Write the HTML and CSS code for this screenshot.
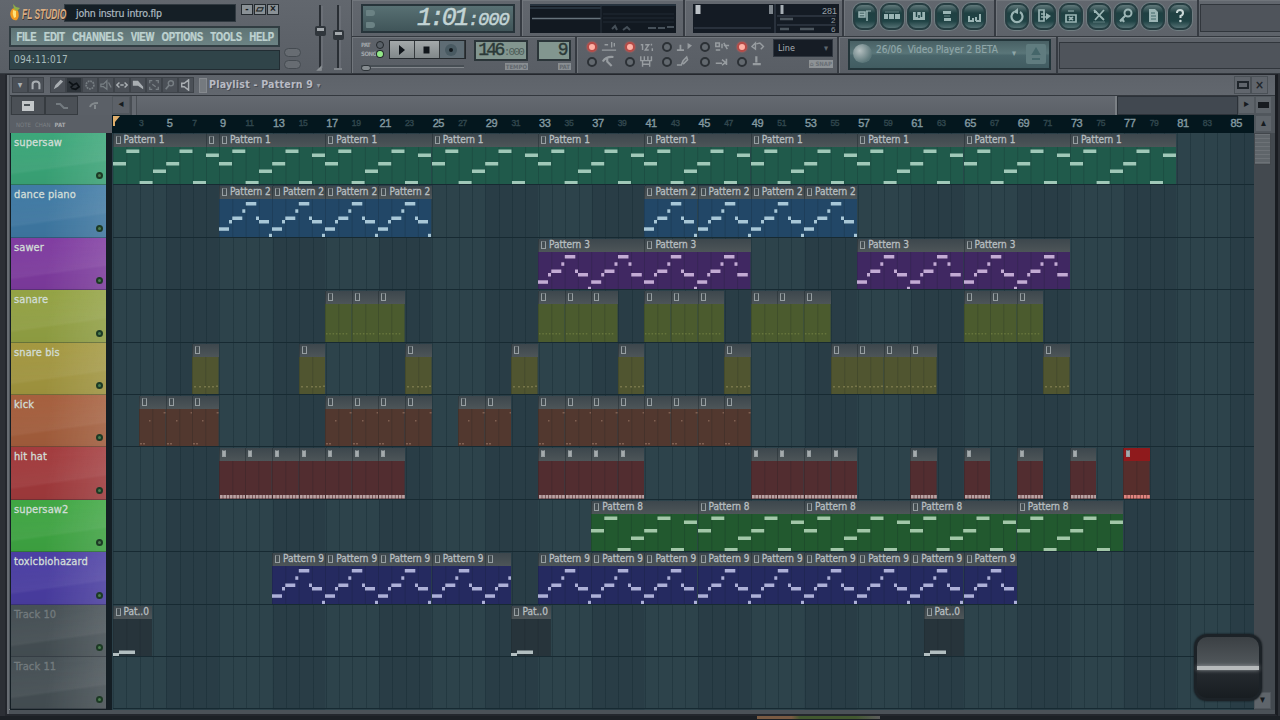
FILE: index.html
```html
<!DOCTYPE html>
<html lang="en">
<head>
<meta charset="utf-8">
<title>Playlist - Pattern 9</title>
<link rel="stylesheet" href="styles.css">
</head>
<body>
<header class="toolbar">
  <section class="main-panel">
    <div class="title-row">
      <svg class="fruit" width="13" height="18" viewBox="0 0 13 18"><path d="M3 5Q0 9 2 13Q4 17 8 16Q11 12 9 7Q6 3 3 5Z" fill="#f29a1f"/><path d="M4 6Q3 10 5 14L7 13V7Z" fill="#ffe27a"/><path d="M5 5L4 0L7 3L11 4L8 7Z" fill="#8fae48"/></svg>
      <span class="brand"><b>FL STUDIO</b></span>
      <span class="filename">john instru intro.flp</span>
      <span class="win-buttons"><i>-</i><i>▱</i><i>×</i></span>
    </div>
    <nav class="menu"><div><span>FILE</span><span>EDIT</span><span>CHANNELS</span><span>VIEW</span><span>OPTIONS</span><span>TOOLS</span><span>HELP</span></div></nav>
    <div class="hint-row"><div class="hint">094:11:017</div><div class="bumps"><i></i><i></i></div></div>
  </section>
  <section class="faders">
    <svg width="60" height="74" viewBox="0 0 60 74"><path d="M20 5V68M38 5V68" stroke="#292e34" stroke-width="2"/><path d="M22 6V68M40 6V68" stroke="#767b81"/><rect x="15" y="26" width="11" height="10" rx="2" fill="#30363c"/><rect x="17" y="28" width="7" height="3" fill="#a4a9ad"/><rect x="33" y="30" width="11" height="10" rx="2" fill="#30363c"/><rect x="35" y="32" width="7" height="3" fill="#a4a9ad"/><path d="M18 70l3-3v3zM34 69h8" stroke="#8c9195" stroke-width="1.500"/></svg>
  </section>
  <section class="panels">
    <div class="panel-row">
      <div class="cell time-cell"><div class="time"><span class="time-icons"><i></i><i></i></span><span class="time-big">1:01</span><span class="time-small">:000</span></div></div>
      <div class="cell scope-cell"><svg width="146" height="29" viewBox="0 0 146 29"><rect width="146" height="29" fill="#121921"/><path d="M2 14.500H71" stroke="#66727b" stroke-width="1.500"/><path d="M0 1H146M0 4H71" stroke="#27333e" stroke-width="2"/><path d="M71 0V29" stroke="#29333d"/><path d="M73 10H144M73 14H144M73 18H144" stroke="#202b35"/><path d="M82 25l3-3 2 4M93 26l4-3 3 3M118 24h8M128 24h7M137 23h7" stroke="#465059" stroke-width="2" fill="none"/></svg></div>
      <div class="cell cpu-cell"><svg width="146" height="29" viewBox="0 0 146 29"><rect width="146" height="29" fill="#141b24"/><path d="M5 1V10" stroke="#bcc2c7" stroke-width="5"/><path d="M78 1V10" stroke="#7e868d" stroke-width="4"/><path d="M89 1V10" stroke="#a7afb5" stroke-width="3"/><path d="M82 0V29M1 24H78M84 12H143M84 21H143" stroke="#303a44" stroke-width="1.500"/><path d="M87 15h13M87 25h9M107 25h14" stroke="#4b555d" stroke-width="2.500"/><text class="tiny-led" x="129" y="10" fill="#98a1a7" font-size="9">281</text><text class="tiny-led" x="138" y="19" font-size="8" fill="#929ba2">2</text><text class="tiny-led" x="138" y="28" font-size="8" fill="#929ba2">6</text></svg></div>
      <div class="cell buttons-cell first">
        <span class="pill"><svg viewBox="0 0 16 16"><path d="M2 4h6v5H2zM10 3v10" fill="none" stroke="currentColor" stroke-width="1.500"/><path d="M2 6.500h6" stroke="currentColor" stroke-width="2"/><path d="M9 3h5" stroke="currentColor"/></svg></span>
        <span class="pill"><svg viewBox="0 0 16 16"><path d="M0 6h4v5H0zM5 6h5v5H5zM11 6h5v5h-5z" fill="currentColor"/><path d="M1 4h14" stroke="currentColor" opacity=".5"/></svg></span>
        <span class="pill"><svg viewBox="0 0 16 16"><path d="M2 4h12v8H2z" fill="currentColor"/><path d="M5.500 4v5M8 7v3M10.500 4v5" stroke="#1d4245" stroke-width="1.500"/></svg></span>
        <span class="pill"><svg viewBox="0 0 16 16"><path d="M4 3h8v3H4zM5 10h7v3H5z" fill="currentColor"/><path d="M5 8h6" stroke="currentColor" opacity=".6"/></svg></span>
        <span class="pill"><svg viewBox="0 0 16 16"><path d="M3 8v5h4v-3M10 13V9M10 13h4V6" fill="none" stroke="currentColor" stroke-width="2"/></svg></span>
      </div>
      <div class="cell buttons-cell second">
        <span class="pill"><svg viewBox="0 0 16 16"><path d="M5 4A5.500 5.500 0 1 0 11 4" fill="none" stroke="currentColor" stroke-width="2.200"/><path d="M9 0v6L4 4z" fill="currentColor"/></svg></span>
        <span class="pill"><svg viewBox="0 0 16 16"><path d="M3 2h5v11H3zM5 6h4M5 9h5" fill="none" stroke="currentColor" stroke-width="1.700"/><path d="M10 5l5 3-5 4z" fill="currentColor"/></svg></span>
        <span class="pill"><svg viewBox="0 0 16 16"><path d="M3 7h10v7H3zM6 9l4 3M10 9l-4 3" fill="none" stroke="currentColor" stroke-width="1.700"/><path d="M5 3h6" stroke="currentColor" opacity=".5" stroke-width="2"/></svg></span>
        <span class="pill"><svg viewBox="0 0 16 16"><path d="M3 2l10 10M13 2L4 12M3 4h3" stroke="currentColor" stroke-width="1.800"/><path d="M2 14h12" stroke="currentColor" opacity=".5"/></svg></span>
        <span class="pill"><svg viewBox="0 0 16 16"><circle cx="10" cy="5" r="3.500" fill="none" stroke="currentColor" stroke-width="2"/><path d="M8 7l-6 6 3-1 1 2" fill="none" stroke="currentColor" stroke-width="2"/></svg></span>
        <span class="pill"><svg viewBox="0 0 16 16"><path d="M4 1h6l3 3v10H4z" fill="currentColor"/><path d="M6 5h4M6 8h5M6 11h5" stroke="#40686a"/></svg></span>
        <span class="pill"><svg viewBox="0 0 16 16"><path d="M5 5Q5 2 8 2Q11 2 11 5Q11 7 8.500 8V10" fill="none" stroke="#c9d8d7" stroke-width="2.100"/><circle cx="8.400" cy="13" r="1.300" fill="#c9d8d7"/></svg></span>
      </div>
      <div class="filler"></div>
    </div>
    <div class="panel-row">
      <div class="cell transport">
        <div class="transport-main">
          <div class="modes"><span><b>PAT</b><i></i></span><span><b>SONG</b><i class="on"></i></span></div>
          <div class="play-buttons"><button><svg width="10" height="12"><path d="M2 1l6 5-6 5z" fill="#10151a"/></svg></button><button><svg width="10" height="12"><path d="M1.500 2.500h6v7h-6z" fill="#10151a"/></svg></button><button class="rec"><svg width="20" height="16"><circle cx="9" cy="8" r="6" fill="#495a62"/><circle cx="9" cy="8" r="2" fill="#11181d"/></svg></button></div>
        </div>
        <div class="position"><i></i></div>
      </div>
      <div class="cell lcds">
        <div class="lcd-col tempo"><div class="lcd">146<small>:000</small></div><b>TEMPO</b></div>
        <div class="lcd-col pat"><div class="lcd">9</div><b>PAT</b></div>
      </div>
      <div class="cell options">
        <div class="option-grid">
          <span class="opt on"><i></i><svg viewBox="0 0 18 14"><path d="M1 11h16M12 2v6M15 3v4M4 5h4" stroke="currentColor" stroke-width="1.500"/></svg></span>
          <span class="opt on"><i></i><svg viewBox="0 0 18 14"><path d="M2 5h2v6M7 5h4l-4 6h4M14 4v2M15 9v3" stroke="currentColor" fill="none" stroke-width="1.600"/></svg></span>
          <span class="opt"><i></i><svg viewBox="0 0 18 14"><path d="M1 11h8M5 5v5" stroke="currentColor" stroke-width="2"/><path d="M13 3l5 3-5 4z" fill="currentColor"/></svg></span>
          <span class="opt"><i></i><svg viewBox="0 0 18 14"><path d="M2 3h4v4H2zM9 4v5M2 11h5M11 3l4 7M11 6h6" stroke="currentColor" fill="none" stroke-width="1.700"/></svg></span>
          <span class="opt on"><i></i><svg viewBox="0 0 18 14"><path d="M1 7l4-4v7zM6 4l4-1 4 4-3 3" stroke="currentColor" fill="none" stroke-width="1.600"/></svg></span>
          <span class="opt"><i></i><svg viewBox="0 0 18 14"><path d="M2 7Q6 1 14 2M7 3v4l5 5" stroke="currentColor" fill="none" stroke-width="2.400"/></svg></span>
          <span class="opt"><i></i><svg viewBox="0 0 18 14"><path d="M2 1v5h12V1M6 1v5M10 1v5M4 6v7M12 6v7M4 10h8" stroke="currentColor" fill="none" stroke-width="1.600"/></svg></span>
          <span class="opt"><i></i><svg viewBox="0 0 18 14"><path d="M1 11h5l2-5 4-4 1 3-5 5" stroke="currentColor" fill="none" stroke-width="1.800"/></svg></span>
          <span class="opt"><i></i><svg viewBox="0 0 18 14"><path d="M2 9h7M9 5l4 3-4 3M14 4v7" stroke="currentColor" fill="none" stroke-width="1.800"/></svg></span>
          <span class="opt"><i></i><svg viewBox="0 0 18 14"><path d="M6 1v7M2 10h9" stroke="currentColor" stroke-width="2.500"/></svg></span>
        </div>
        <div class="snap"><div class="select"><span>Line</span><i>▾</i></div><b>⌂ SNAP</b></div>
      </div>
      <div class="cell news-cell"><div class="news"><i class="globe"></i><span>26/06&nbsp; Video Player 2 BETA</span><em>▾</em><svg width="20" height="20"><rect width="20" height="20" rx="2" fill="#607c7f"/><path d="M10 5l-3 5h6zM6 15h8" fill="#45666a" stroke="#45666a" stroke-width="2"/></svg></div></div>
      <div class="filler low"></div>
    </div>
  </section>
</header>

<main class="window">
  <div class="titlebar">
    <span class="tool">▾</span>
    <span class="tool"><svg viewBox="0 0 14 14"><path d="M3 12V6Q3 3 7 3Q11 3 11 6V12" fill="none" stroke="currentColor" stroke-width="2.400"/></svg></span>
    <span class="tool gap"><svg viewBox="0 0 14 14"><path d="M2 12l2-5 6-6 3 2-6 6z" fill="currentColor"/></svg></span>
    <span class="tool active"><svg viewBox="0 0 14 14"><path d="M1 3l5 4 4-2 3 4-4 3-5-1M6 7l-3 3" fill="none" stroke="#0c1115" stroke-width="2"/></svg></span>
    <span class="tool dim"><svg viewBox="0 0 14 14"><circle cx="7" cy="7" r="4.500" fill="none" stroke="currentColor" stroke-dasharray="2 1" stroke-width="2"/></svg></span>
    <span class="tool dim"><svg viewBox="0 0 14 14"><path d="M1 6h3l4-4v10L4 9H1zM10 4l3 6" fill="none" stroke="currentColor" stroke-width="1.500"/></svg></span>
    <span class="tool"><svg viewBox="0 0 14 14"><path d="M4 4L1 7l3 3M10 4l3 3-3 3M5 7h4" fill="none" stroke="currentColor" stroke-width="1.700"/></svg></span>
    <span class="tool"><svg viewBox="0 0 14 14"><path d="M1 2h6l6 7v3l-6-4H1z" fill="currentColor"/></svg></span>
    <span class="tool dim"><svg viewBox="0 0 14 14"><path d="M2 5V2h3M9 2h3v3M12 9v3H9M5 12H2V9M5 6l4 3" fill="none" stroke="currentColor" stroke-width="1.500"/></svg></span>
    <span class="tool dim"><svg viewBox="0 0 14 14"><circle cx="8" cy="5" r="3" fill="none" stroke="currentColor" stroke-width="1.700"/><path d="M6 7l-4 5" stroke="currentColor" stroke-width="2"/></svg></span>
    <span class="tool"><svg viewBox="0 0 14 14"><path d="M2 5h3l5-4v12L5 9H2z" fill="none" stroke="currentColor" stroke-width="1.700"/></svg></span>
    <span class="grip"></span>
    <h1>Playlist - Pattern 9 <small>▾</small></h1>
    <span class="window-button"><svg width="12" height="8"><path d="M1 1h10v6H1z" fill="none" stroke="currentColor" stroke-width="2"/></svg></span><span class="window-button">×</span>
  </div>
  <div class="scrollrow">
    <div class="tabs"><span><svg width="12" height="10"><rect width="12" height="10" fill="#c4c8ca"/><path d="M2 4h6" stroke="#4a5156" stroke-width="2"/></svg></span><span><svg width="14" height="10"><path d="M1 3h4l4 4h4" fill="none" stroke="#747b80" stroke-width="2"/></svg></span><span class="flat"><svg width="12" height="10"><path d="M1 6q1-4 8-4M6 4v4" fill="none" stroke="#83898d" stroke-width="2"/></svg></span></div>
    <span class="arrow">◂</span>
    <div class="track"><div class="thumb"></div><div class="rest"></div></div>
    <span class="arrow">▸</span><span class="arrow bar"><i></i></span>
  </div>
  <div class="ruler-row">
    <div class="filter"><span>NOTE</span><span>CHAN</span><b>PAT</b></div>
    <div class="ruler" id="ruler"></div>
    <span class="arrow up">▴</span>
  </div>
  <div class="playlist">
    <div class="heads" id="heads"></div>
    <div class="lanes" id="lanes"></div>
    <div class="vscroll"><div class="vthumb"></div><span class="arrow">▾</span></div>
  </div>
  <div class="mixer-cube"><i></i></div>
</main>
<footer class="desktop-edge"><i></i></footer>
<script src="app.js"></script>
</body>
</html>
```
FILE: styles.css
```css
* { box-sizing: border-box; }
body { margin: 0; width: 1280px; height: 720px; overflow: hidden; display: flex; flex-direction: column; background: #2c2f35; color: #c8cccf; font-family: "DejaVu Sans Condensed", "DejaVu Sans", sans-serif; }
i, em { font-style: normal; }
svg { display: block; }

.toolbar { height: 74px; flex: none; display: flex; background: linear-gradient(#62676e, #595e65); border-bottom: 1px solid #363b41; }
.main-panel { width: 300px; padding: 3px 0 0 9px; }
.title-row { display: flex; height: 20px; align-items: center; }
.fruit { flex: none; margin-top: -1px; }
.brand { width: 42px; flex: none; }
.brand b { display: inline-block; white-space: nowrap; font: italic bold 14px/18px "Liberation Sans", sans-serif; color: #d9ac83; text-shadow: 1px 1px #39302b; transform: scaleX(.6); transform-origin: left; }
.filename { width: 172px; height: 18px; padding-left: 11px; background: #151f26; border: 1px solid #313a41; font-size: 10.500px; line-height: 16px; letter-spacing: -.2px; color: #aebbc1; -webkit-text-stroke: .2px; }
.win-buttons { display: flex; gap: 1px; margin: -7px 0 0 5px; }
.win-buttons i { width: 12px; height: 11px; border: 1px solid #242a2f; background: #8a9196; color: #171c20; font: bold 10px/8px "Liberation Sans", sans-serif; text-align: center; }
.menu { margin-top: 3px; width: 271px; height: 21px; border: 2px solid #313d42; background: linear-gradient(#5f7475, #6c8384); }
.menu div { width: 393px; height: 17px; padding: 0 6px 0 8px; display: flex; justify-content: space-between; font: bold 13.500px/18px "Liberation Sans", sans-serif; color: #bed2d0; text-shadow: 1px 0 #9db3b2; transform: scaleX(.679); transform-origin: left; }
.hint-row { display: flex; margin-top: 3px; }
.hint { width: 271px; height: 20px; border: 1px solid #222d33; background: #304449; padding-left: 4px; font-size: 10px; line-height: 18px; letter-spacing: .2px; color: #a9bcbd; flex: none; }
.bumps { margin: -2px 0 0 4px; display: flex; flex-direction: column; gap: 3px; }
.bumps i { width: 17px; height: 9px; border-radius: 5px; border: 1px solid #454b51; background: #676c72; }
.faders { width: 52px; overflow: hidden; border-right: 1px solid #3b4046; }

.panels { flex: 1; }
.panel-row { height: 37px; display: flex; border-bottom: 1px solid #33383e; box-shadow: inset 0 1px #70757b; }
.cell { flex: none; border-right: 2px solid #363b42; box-shadow: inset 1px 1px #71767c; }
.time-cell { width: 170px; padding: 4px 5px 0 9px; }
.time { height: 29px; width: 154px; border: 2px solid #27343a; background: linear-gradient(#587073, #405559); color: #c3d4d5; display: flex; align-items: baseline; overflow: hidden; font: italic 25px/25px "Liberation Mono", monospace; -webkit-text-stroke: .5px; }
.time-icons { width: 54px; display: flex; flex-direction: column; gap: 6px; padding-left: 3px; align-self: center; }
.time-icons i { width: 9px; height: 6px; background: #6b8284; border-radius: 1px 4px 4px 1px; }
.time-big { letter-spacing: -2.600px; }
.time-small { font-size: 19px; letter-spacing: -1.100px; margin-left: 1px; }
.scope-cell { width: 163px; padding: 4px 0 0 8px; }
.cpu-cell { width: 159px; padding: 4px 0 0 8px; }
.tiny-led { font-family: "Liberation Sans", sans-serif; }
.buttons-cell { display: flex; padding-top: 3px; gap: 3.200px; }
.buttons-cell.first { width: 152px; padding-left: 9px; }
.buttons-cell.second { width: 203px; padding-left: 9px; }
.pill { width: 24px; height: 27px; border-radius: 9px; border: 2px solid #263e42; background: linear-gradient(#61797b, #1f4042 35%, #204345 70%, #547073); box-shadow: 0 0 0 1px #6f7c80; color: #9bb5b5; padding: 3px 2px; }
.pill svg { width: 16px; height: 16px; }
.filler { flex: 1; margin: 4px 0 4px 1px; border: 1px solid #31363c; border-right: 0; background: #4f545b; }
.filler.low { margin-top: 5px; }
.transport { width: 118px; padding: 3px 0 0 9px; border: 0; }
.transport-main { display: flex; gap: 5px; }
.modes { width: 23px; }
.modes span { display: flex; justify-content: space-between; align-items: center; height: 9px; }
.modes b { font-size: 6px; color: #a0a5aa; letter-spacing: -.5px; }
.modes i { width: 8px; height: 8px; border: 1px solid #22272b; border-radius: 50%; background: #596067; }
.modes .on { background: #93e888; }
.play-buttons { display: flex; height: 19px; border: 1px solid #24292d; }
.play-buttons button { width: 25px; padding: 0; border: 0; border-right: 1px solid #353a3d; background: linear-gradient(#a4a9aa, #81888a); display: flex; justify-content: center; align-items: center; }
.play-buttons .rec { background: #5e6c74; }
.position { margin-top: 6px; width: 103px; height: 3px; background: #474e54; border-bottom: 1px solid #81868b; }
.position i { display: block; width: 10px; height: 6px; border-radius: 4px; border: 1px solid #2d3338; background: #868c90; }
.lcds { width: 107px; padding: 3px 0 0 4px; display: flex; gap: 9px; box-shadow: inset 0 1px #71767c; }
.lcd-col { display: flex; flex-direction: column; align-items: flex-end; gap: 2px; }
.lcd-col > b { font-size: 6px; line-height: 7px; background: #898e92; color: #62686e; padding: 0 1px; }
.lcd { height: 21px; border: 2px solid #2b3539; background: #82968f; font: 18px/17px "Liberation Mono", monospace; -webkit-text-stroke: .4px; letter-spacing: -2.600px; color: #2b3937; text-align: right; white-space: nowrap; overflow: hidden; padding-right: 3px; }
.lcd small { font-size: 11px; letter-spacing: -1.800px; -webkit-text-stroke: 0; margin-left: 1px; color: #4d5d59; }
.tempo .lcd { width: 54px; }
.pat .lcd { width: 34px; }
.options { width: 262px; padding: 2px 0 0 9px; display: flex; }
.option-grid { display: grid; grid-template-columns: repeat(5, 37.500px); grid-template-rows: 15px 15px; width: 187px; flex: none; }
.opt { display: flex; align-items: center; gap: 4px; color: #979ca0; }
.opt i { width: 10px; height: 10px; border-radius: 50%; border: 2px solid #2c3136; background: #63696f; flex: none; margin-left: 1px; }
.opt.on i { background: #ffb1a5; border-color: #b34b47; box-shadow: 0 0 2px #e35d58; }
.opt svg { width: 16px; height: 13px; }
.snap { display: flex; flex-direction: column; align-items: flex-end; gap: 3px; }
.select { width: 60px; height: 18px; display: flex; justify-content: space-between; padding: 0 4px; background: #161c25; border: 1px solid #303740; color: #aab1b5; font-size: 9px; line-height: 16px; }
.select i { color: #5d666e; }
.snap > b { font-size: 6px; line-height: 8px; color: #696f75; background: #8d9296; padding: 0 1px; }
.news-cell { width: 219px; padding: 2px 0 0 9px; }
.news { width: 203px; height: 31px; border: 2px solid #23353a; background: linear-gradient(#486064, #5a7679 45%, #49656a 54%, #415c61); display: flex; padding: 3px; color: #8fa6a8; }
.globe { width: 19px; height: 19px; border-radius: 50%; background: radial-gradient(circle at 35% 35%, #b4bfc0, #5c777a 70%); flex: none; }
.news span { width: 140px; padding-left: 4px; font-size: 10px; line-height: 13px; flex: none; white-space: nowrap; margin-top: -1px; -webkit-text-stroke: .2px; }
.news em { font-size: 9px; margin: 4px 2px 0 0; width: 12px; }

.window { flex: none; height: 642px; margin-left: 5px; width: 1273px; border: 2px solid #24272d; border-top-width: 1px; padding-left: 3px; background: #50565c; border-right: 3px solid #191c21; box-shadow: inset 2px 0 #676c72, inset 0 -4px #4b5157, inset 0 -5px #858b8f; position: relative; overflow: hidden; }
.titlebar { display: flex; height: 21px; background: linear-gradient(#5e636a, #62676e); align-items: center; padding: 0 7px 0 2px; border-bottom: 1px solid #33383e; }
.tool { width: 16px; height: 16px; padding: 1px; color: #a9aeb2; background: #4b5057; border: 1px solid #3e4349; font-size: 10px; line-height: 12px; text-align: center; }
.tool svg { width: 12px; height: 12px; }
.tool.gap { margin-left: 6px; }
.tool.active { background: #2e343a; }
.tool.dim { color: #777e83; }
.grip { width: 8px; height: 15px; border: 1px solid #85898e; background: #757a7f; margin: 0 2px 0 5px; }
.titlebar h1 { margin: 0; flex: 1; font-size: 10.500px; line-height: 18px; letter-spacing: .25px; color: #b9bbc4; text-shadow: 1px 1px #484c53; }
.titlebar h1 small { font-size: 8px; color: #979ba3; }
.window-button { width: 17px; height: 18px; display: flex; align-items: center; justify-content: center; color: #1f252b; border: 1px solid #4a5056; font-weight: bold; font-size: 12px; }
.scrollrow { display: flex; height: 19px; padding-left: 1px; }
.tabs { width: 101px; display: flex; flex: none; }
.tabs span { width: 34px; display: flex; justify-content: center; align-items: center; border: 1px solid #363b40; background: #4b5056; }
.tabs .flat { border: 0; background: #5b6067; }
.arrow { width: 17px; height: 17px; line-height: 16px; text-align: center; font-size: 11px; color: #161b20; background: #5f656b; flex: none; box-shadow: inset 0 0 0 1px #51575d; }
.scrollrow > .arrow:nth-child(2) { width: 18px; background: #5c6168; }
.track { flex: 1; display: flex; }
.thumb { width: 987px; background: linear-gradient(#656a71, #5b6067); border-left: 2px solid #484d53; border-right: 2px solid #7b8085; box-shadow: inset 4px 0 #656a71, inset 5px 0 #4a4f55; }
.rest { flex: 1; background: #414850; border: 1px solid #2c3239; }
.scrollrow > .arrow { height: 18px; }
.bar { padding: 6px 3px; margin-right: 3px; }
.bar i { display: block; height: 6px; background: #171b20; }
.ruler-row { display: flex; height: 18px; }
.filter { width: 102px; padding: 0 0 0 6px; display: flex; gap: 4px; align-items: center; font-size: 6px; color: #7b8085; background: #5a5f66; flex: none; }
.filter b { color: #a8abad; }
.ruler { width: 1142px; padding-left: .5px; flex: none; background: #04171e; display: grid; grid-template-columns: repeat(43, 26.600px); overflow: hidden; font: 11px/17px "Liberation Sans", sans-serif; -webkit-text-stroke: .4px; letter-spacing: -.4px; color: #8399a0; }
.ruler span { padding-left: 1px; }
.ruler .minor { color: #30464d; font-size: 8.500px; padding-left: 0; }

.playlist { display: flex; height: 577px; overflow: hidden; background: #141e24; }
.heads { width: 96px; padding-left: 1px; display: grid; grid-template-rows: repeat(11, 52.400px); flex: none; }
.head { display: flex; flex-direction: column; justify-content: space-between; padding: 4px 3px 5px 3px; border-bottom: 1px solid rgba(20, 25, 35, .35); background-image: linear-gradient(172deg, transparent, rgba(255,255,255,.05) 62%, transparent 66%), linear-gradient(100deg, transparent 40%, rgba(255,255,255,.13)), linear-gradient(transparent, rgba(0,0,0,.06)); font-size: 11px; line-height: 12px; letter-spacing: .1px; color: #d2ddd7; white-space: nowrap; -webkit-text-stroke: .3px; }
.head.muted { color: #737b7e; }
.head i { align-self: flex-end; width: 7px; height: 7px; border-radius: 50%; border: 2px solid #1d3a25; background: #4b7d4f; }
.lanes { width: 1142px; margin-left: 6px; padding-left: .5px; overflow: hidden; flex: none; display: grid; grid-template-rows: repeat(11, 52.400px); background: linear-gradient(90deg, #2d434b 50%, #293d46 50%) .5px 0 / 106.400px 100%; }
.lane { display: grid; grid-template-columns: repeat(86, 13.300px); border-bottom: 1.500px solid #172a32; background: repeating-linear-gradient(90deg, rgba(15,35,43,.32) 0 1px, transparent 1px 13.300px); }
.clip { display: flex; flex-direction: column; overflow: hidden; min-width: 0; padding-top: 1px; grid-row: 1; }
.clip-title { height: 13px; flex: none; padding-left: 2px; background: linear-gradient(#3d474d, #4d5558); color: #b7bec0; font-size: 10px; line-height: 12px; white-space: nowrap; overflow: hidden; display: flex; gap: 3px; border-left: 1px solid rgba(25,34,40,.4); -webkit-text-stroke: .3px; }
.clip-title i { margin-top: 2px; width: 5px; height: 8px; border: 1px solid #969ea1; border-top-color: #687074; flex: none; }
.clip-body { flex: 1; display: block; width: 100%; min-height: 0; }
.clip.solid .clip-title i { background: #a5abad; width: 4px; height: 7px; }
.clip.hot .clip-title { background: #8f1a1c; }

.vscroll { flex: 1; background: #43494f; display: flex; flex-direction: column; justify-content: space-between; }
.vthumb { width: 17px; height: 32px; background: repeating-linear-gradient(#6d7277 0 1px, #5f656a 1px 4px); border: 1px solid #41464b; }
.vscroll .arrow { margin-bottom: 1px; }
.ruler-row .up { margin-left: 1px; }
.mixer-cube { position: absolute; left: 1187px; top: 559px; width: 68px; height: 67px; border-radius: 13px; border: 3px solid #1c2227; background: linear-gradient(#3b4044, #50565a 44%, #5b6065 49%, #252a2f 56%, #181d21); box-shadow: 0 0 2px #0a0e11; display: flex; align-items: center; }
.mixer-cube i { width: 100%; height: 4px; background: #b6babb; box-shadow: 0 0 4px #8f9497; }
.desktop-edge { height: 4px; background: #1c2025; }
.desktop-edge i { display: block; margin-left: 757px; width: 123px; height: 3px; background: linear-gradient(90deg, #7a5b43 28%, #42582f 35% 80%, #5c5c5c); }
```
FILE: app.js
```js
const BAR = 13.3;

// Note shapes: [x, y, width], measured from the top left of the lane.
const chords = [[0, 29, 13], [13.3, 16.5, 13], [26.6, 48, 13], [40, 36.5, 13], [53.2, 29, 13], [66.5, 16.5, 13], [80, 48, 13], [93, 20.5, 13]];
const riff = [[0, 42.3, 10], [10, 35, 3], [13.3, 31.5, 10], [23.3, 24.3, 3], [26.8, 17, 10.5], [37, 31.5, 3], [40, 35, 10], [50, 48.8, 3]];
const riffLong = [...riff, ...riff.slice(0, 5).map(([x, y, w]) => [x + 53.2, y, w]), [90.5, 24.3, 3], [93.3, 35, 10.5]];
const stab = [[0, 48, 6], [6, 45.5, 16]];
const dots = (y, step, w, end) => Array.from({ length: Math.floor(end / step) }, (_, i) => [i * step + 1, y, w]);

const two = (...starts) => starts.map(s => [s, 2, '']);
const four = (label, ...starts) => starts.map(s => [s, 4, label]);
const eight = (label, ...starts) => starts.map(s => [s, 8, label]);

const tracks = [
  { name: 'supersaw', head: '#3ba779', body: '#205a4b', note: '#a0c8b8', notes: chords,
    clips: [[1, 7, 'Pattern 1'], [8, 1, '', '', 7], ...eight('Pattern 1', 9, 17, 25, 33, 41, 49, 57, 65, 73)] },
  { name: 'dance piano', head: '#3f7aa5', body: '#224767', note: '#a8c7d7', notes: riff, clips: four('Pattern 2', 9, 13, 17, 21, 41, 45, 49, 53) },
  { name: 'sawer', head: '#803ca1', body: '#402862', note: '#c3abd4', notes: riffLong, clips: eight('Pattern 3', 33, 41, 57, 65) },
  { name: 'sanare', head: '#94a344', body: '#4b5b2e', note: '#66753c', notes: dots(43, 3.3, 1.5, 26), thin: true,
    clips: two(17, 19, 21, 33, 35, 37, 41, 43, 45, 49, 51, 53, 65, 67, 69) },
  { name: 'snare bis', head: '#a49840', body: '#505530', note: '#77764a', notes: [[2, 43, 2], [7, 43, 2], [12, 43, 2], [16, 43, 2], [20, 43, 2], [24, 42.5, 2]], thin: true,
    clips: two(7, 15, 23, 31, 39, 47, 55, 57, 59, 61, 71) },
  { name: 'kick', head: '#a65f3d', body: '#52382f', note: '#806052', notes: [[24.6, 17, 2], [10, 25, 1.5], [1, 48, 2], [4, 48, 2]], thin: true,
    clips: two(3, 5, 7, 17, 19, 21, 23, 27, 29, 33, 35, 37, 39, 41, 43, 45, 47) },
  { name: 'hit hat', head: '#a33b3d', body: '#522d30', note: '#b8a1a2', notes: dots(48, 3.3, 2.7, 26.6), kind: 'solid',
    clips: [...two(9, 11, 13, 15, 17, 19, 21, 33, 35, 37, 39, 49, 51, 53, 55, 61, 65, 69, 73), [77, 2, '', 'hot']] },
  { name: 'supersaw2', head: '#3fa743', body: '#22592f', note: '#a2c7a8', notes: chords, clips: eight('Pattern 8', 37, 45, 53, 61, 69) },
  { name: 'toxicbiohazard', head: '#4b3ea4', body: '#252a60', note: '#adb0d7', notes: riff,
    clips: [...four('Pattern 9', 13, 17, 21, 25), [29, 2, ''], ...four('Pattern 9', 33, 37, 41, 45, 49, 53, 57, 61, 65)] },
  { name: 'Track 10', head: '#465055', body: '#27343b', note: '#b3bfc1', notes: stab, muted: true,
    clips: [[1, 3, 'Pat..0'], [31, 3, 'Pat..0'], [62, 3, 'Pat..0']] },
  { name: 'Track 11', head: '#465055', clips: [], muted: true },
];

const noteSvg = (t, bars, hot, offset) => {
  const w = bars * BAR;
  const rects = t.notes.map(([x, y, nw]) =>
    `<rect x="${x - offset * BAR}" y="${y - 14}" width="${nw}" height="${t.thin ? 1.5 : 3.5}" fill="${hot ? '#e08580' : t.note}"/>`).join('');
  let lines = '';
  for (let x = 0; x < w - 1; x += BAR) lines += `<path d="M${x + .5} 0V38" stroke="#101c22" stroke-opacity=".18"/>`;
  return `<svg class="clip-body" viewBox="0 0 ${w} 37.4" preserveAspectRatio="none"><rect width="${w}" height="40" fill="${hot ? '#572e2c' : t.body}"/>${lines}${rects}</svg>`;
};

const clipHtml = (t, [start, bars, label, hot, offset = 0]) =>
  `<div class="clip ${t.kind || ''} ${hot || ''}" style="grid-column:${start} / span ${bars}"><div class="clip-title"><i></i>${label}</div>${noteSvg(t, bars, hot, offset)}</div>`;

document.getElementById('heads').innerHTML = tracks.map(t =>
  `<div class="head ${t.muted ? 'muted' : ''}" style="background-color:${t.head}"><span>${t.name}</span><i></i></div>`).join('');
document.getElementById('lanes').innerHTML = tracks.map(t =>
  `<div class="lane">${t.clips.map(c => clipHtml(t, c)).join('')}</div>`).join('');

let marks = '<svg width="8" height="12"><path d="M0 1h7L2 7v4H0z" fill="#dfae6c"/></svg>';
for (let n = 3; n <= 85; n += 2) marks += `<span class="${n % 4 === 3 ? 'minor' : ''}">${n}</span>`;
document.getElementById('ruler').innerHTML = marks;
```
